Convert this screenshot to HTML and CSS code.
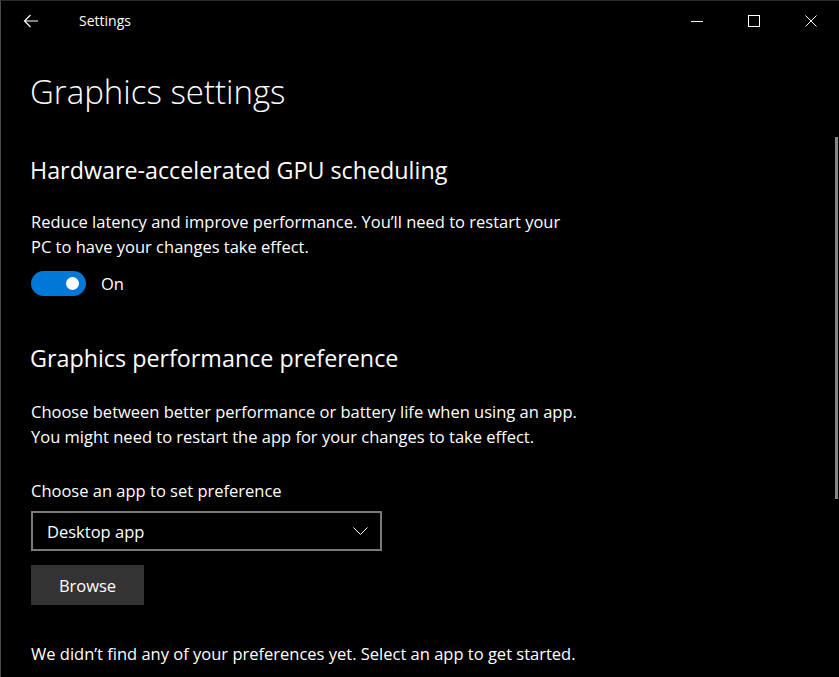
FILE: index.html
```html
<!DOCTYPE html>
<html lang="en">

<head>
    <meta charset="UTF-8">
    <meta name="viewport" content="width=device-width, initial-scale=1.0">
    <title>Settings</title>
    <link rel="stylesheet" href="styles.css">
</head>

<body>
    <div class="window">
        <!-- title bar -->
        <div class="titlebar">
            <a href="javascript:;" class="back">
                <svg width="16" height="14" viewBox="0 0 16 14">
                    <path d="M15 7H1.5M7.5 1L1.5 7l6 6" fill="none" stroke="#fff" stroke-width="1.2"/>
                </svg>
            </a>
            <span class="app-title">Settings</span>
            <div class="controls">
                <a href="javascript:;" class="ctl">
                    <svg width="12" height="12" viewBox="0 0 12 12"><path d="M0 6.5h12" stroke="#fff" stroke-width="1"/></svg>
                </a>
                <a href="javascript:;" class="ctl">
                    <svg width="12" height="12" viewBox="0 0 12 12"><rect x="0.5" y="0.5" width="11" height="11" fill="none" stroke="#fff" stroke-width="1"/></svg>
                </a>
                <a href="javascript:;" class="ctl">
                    <svg width="12" height="12" viewBox="0 0 12 12"><path d="M0.5 0.5l11 11M11.5 0.5l-11 11" stroke="#fff" stroke-width="1"/></svg>
                </a>
            </div>
        </div>

        <!-- page content -->
        <div class="page">
            <h1>Graphics settings</h1>

            <div class="section">
                <h2>Hardware-accelerated GPU scheduling</h2>
                <p>Reduce latency and improve performance. You’ll need to restart your<br>PC to have your changes take effect.</p>
                <div class="toggle-row">
                    <span class="toggle on"><span class="knob"></span></span>
                    <span class="toggle-label">On</span>
                </div>
            </div>

            <div class="section">
                <h2>Graphics performance preference</h2>
                <p>Choose between better performance or battery life when using an app.<br>You might need to restart the app for your changes to take effect.</p>
                <div class="field-label">Choose an app to set preference</div>
                <div class="select">
                    <span>Desktop app</span>
                    <svg width="15" height="8" viewBox="0 0 15 8"><path d="M0.5 0.5l7 7 7-7" fill="none" stroke="#fff" stroke-width="1"/></svg>
                </div>
                <a href="javascript:;" class="btn">Browse</a>
                <p class="empty">We didn’t find any of your preferences yet. Select an app to get started.</p>
            </div>
        </div>

        <!-- scrollbar thumb -->
        <div class="scroll-thumb"></div>
    </div>
</body>

</html>
```

FILE: styles.css
```css
* {
    margin: 0;
    padding: 0;
    box-sizing: border-box;
}

a {
    text-decoration: none;
    color: inherit;
}

body {
    background: #000;
    color: #fff;
    font-family: "Open Sans", "Noto Sans", sans-serif;
}

.window {
    position: relative;
    width: 839px;
    height: 677px;
    overflow: hidden;
    background: #000;
    border-top: 1px solid #2b2b2b;
    border-left: 1px solid #4a4a4a;
}

.titlebar {
    display: flex;
    align-items: center;
    height: 39px;
}

.back {
    display: flex;
    align-items: center;
    justify-content: center;
    width: 60px;
    height: 39px;
}

.app-title {
    margin-left: 18px;
    font-size: 14px;
}

.controls {
    display: flex;
    margin-left: auto;
}

.ctl {
    display: flex;
    align-items: center;
    justify-content: center;
    width: 57px;
    height: 39px;
}

.page {
    padding: 0 0 0 29px;
}

h1 {
    margin-top: 30px;
    font-size: 33px;
    font-weight: 300;
    line-height: 44px;
}

h2 {
    font-size: 23.3px;
    font-weight: 400;
    line-height: 32px;
}

.section {
    margin-top: 40px;
}

.section + .section {
    margin-top: 46px;
}

.section p {
    margin-top: 24px;
    font-size: 16.5px;
    line-height: 24.5px;
    padding-left: 1px;
}

.section + .section p {
    margin-top: 26px;
}

.toggle-row {
    display: flex;
    align-items: center;
    margin-top: 12px;
    padding-left: 1px;
}

.toggle {
    position: relative;
    width: 55px;
    height: 25px;
    border-radius: 13px;
    background: #0078d7;
}

.knob {
    position: absolute;
    top: 6px;
    right: 7px;
    width: 13px;
    height: 13px;
    border-radius: 50%;
    background: #fff;
}

.toggle-label {
    margin-left: 15px;
    font-size: 16.5px;
}

.field-label {
    margin-top: 30px;
    padding-left: 1px;
    font-size: 16.5px;
    line-height: 24px;
}

.select {
    display: flex;
    align-items: center;
    justify-content: space-between;
    width: 351px;
    height: 40px;
    margin-top: 8px;
    margin-left: 1px;
    padding: 0 12px 0 14px;
    border: 2px solid #7a7a7a;
    font-size: 16.5px;
}

.btn {
    display: flex;
    align-items: center;
    justify-content: center;
    width: 113px;
    height: 40px;
    margin-top: 14px;
    margin-left: 1px;
    background: #333;
    font-size: 16.5px;
}

.section p.empty {
    margin-top: 37px;
}

.scroll-thumb {
    position: absolute;
    top: 136px;
    right: 1px;
    width: 3px;
    height: 362px;
    background: #858585;
}
```
